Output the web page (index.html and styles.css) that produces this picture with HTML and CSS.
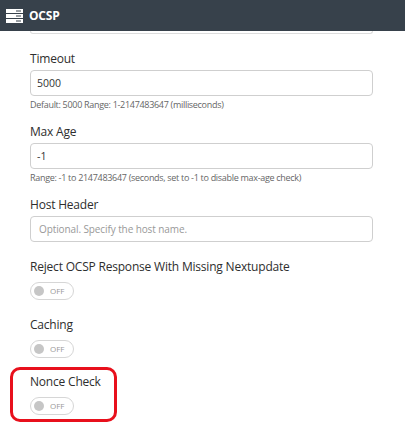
FILE: index.html
```html
<!DOCTYPE html>
<html>
<head>
<meta charset="utf-8">
<link rel="stylesheet" href="styles.css">
</head>
<body>
<div class="header">
  <svg class="hicon" width="17" height="14" viewBox="0 0 17 14">
    <rect x="0" y="0" width="17" height="4" fill="#fff"/>
    <rect x="0" y="5" width="17" height="4" fill="#fff"/>
    <rect x="0" y="10" width="17" height="4" fill="#fff"/>
    <rect x="10" y="1.5" width="5" height="1" fill="#37414b"/>
    <rect x="10" y="6.5" width="5" height="1" fill="#37414b"/>
    <rect x="10" y="11.5" width="5" height="1" fill="#37414b"/>
  </svg>
  <span class="htitle">OCSP</span>
</div>
<div class="content">
  <div class="prev"></div>
  <div class="group">
    <div class="label">Timeout</div>
    <div class="input">5000</div>
    <div class="hint">Default: 5000 Range: 1-2147483647 (milliseconds)</div>
  </div>
  <div class="group">
    <div class="label">Max Age</div>
    <div class="input">-1</div>
    <div class="hint">Range: -1 to 2147483647 (seconds, set to -1 to disable max-age check)</div>
  </div>
  <div class="group g-host">
    <div class="label">Host Header</div>
    <div class="input placeholder">Optional. Specify the host name.</div>
  </div>
  <div class="group g-toggle">
    <div class="label">Reject OCSP Response With Missing Nextupdate</div>
    <div class="toggle"><span class="knob"></span><span class="off">OFF</span></div>
  </div>
  <div class="group g-toggle g-last">
    <div class="label">Caching</div>
    <div class="toggle"><span class="knob"></span><span class="off">OFF</span></div>
  </div>
  <div class="highlight">
    <div class="label">Nonce Check</div>
    <div class="toggle"><span class="knob"></span><span class="off">OFF</span></div>
  </div>
</div>
</body>
</html>
```
FILE: styles.css
```css
html, body {
  margin: 0;
  padding: 0;
  background: #fff;
  font-family: "Open Sans", "Noto Sans", sans-serif;
  overflow: hidden;
}
.header {
  height: 31px;
  background: #37414b;
  display: flex;
  align-items: center;
  padding-left: 6px;
  box-sizing: border-box;
}
.hicon {
  display: block;
}
.htitle {
  color: #fff;
  font-weight: 700;
  font-size: 12px;
  letter-spacing: -0.2px;
  margin-left: 6px;
}
.content {
  padding: 0 32px 0 30px;
  display: flex;
  flex-direction: column;
  align-items: stretch;
}
.prev {
  height: 2px;
  border: 1px solid #dcdcdc;
  border-top: none;
  border-radius: 0 0 4px 4px;
  margin-bottom: 16px;
}
.group {
  margin-bottom: 12px;
}
.g-host {
  margin-bottom: 16px;
}
.g-toggle {
  margin-bottom: 16px;
}
.g-toggle.g-last {
  margin-bottom: 9px;
}
.label {
  font-size: 12px;
  line-height: 18px;
  letter-spacing: -0.2px;
  color: #2e2e2e;
  margin-bottom: 2px;
}
.input {
  height: 26px;
  box-sizing: border-box;
  border: 1px solid #cfcfcf;
  border-radius: 4px;
  padding: 0 6px;
  font-size: 10.5px;
  line-height: 24px;
  color: #333;
}
.input.placeholder {
  font-size: 10px;
  letter-spacing: -0.1px;
  color: #999;
  padding-left: 8px;
}
.hint {
  font-size: 9px;
  line-height: 13px;
  letter-spacing: -0.3px;
  color: #666;
  margin-top: 2px;
}
.toggle {
  margin-top: 6px;
  width: 44px;
  height: 18px;
  box-sizing: border-box;
  border: 1.5px solid #d6d6d6;
  border-radius: 10px;
  display: flex;
  align-items: center;
  padding-left: 3px;
}
.knob {
  width: 10px;
  height: 10px;
  border-radius: 50%;
  background: #c6c6c6;
}
.off {
  font-size: 8px;
  color: #999;
  margin-left: 6px;
  line-height: 1;
}
.highlight {
  align-self: flex-start;
  border: 3px solid #e8101c;
  border-radius: 10px;
  margin-left: -20px;
  padding: 3px 13px 4px 17px;
}
.highlight .toggle {
  margin-top: 6px;
}
```
